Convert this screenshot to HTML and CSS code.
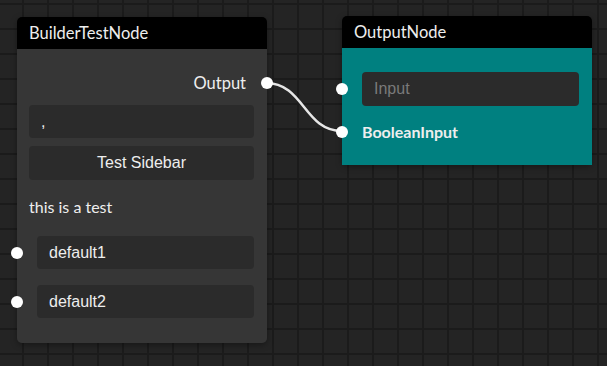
FILE: index.html
```html
<!DOCTYPE html>
<html lang="en">
  <head>
    <meta charset="UTF-8" />
    <title>Node Editor</title>
    <link rel="stylesheet" href="styles.css">
  </head>
  <body>
    <div class="editor">
      <!-- connection between the two nodes -->
      <svg class="wires" width="607" height="366">
        <path d="M266 83 C 304 83, 304 131, 342 131" />
      </svg>

      <div class="node node-builder">
        <div class="node-title">BuilderTestNode</div>
        <div class="node-body">
          <div class="port-row output-row">
            <span class="port-label">Output</span>
            <span class="socket socket-right"></span>
          </div>
          <div class="field">,</div>
          <button class="node-button">Test Sidebar</button>
          <div class="port-row text-row">this is a test</div>
          <div class="port-row input-row">
            <span class="socket socket-left"></span>
            <div class="field">default1</div>
          </div>
          <div class="port-row input-row second">
            <span class="socket socket-left"></span>
            <div class="field">default2</div>
          </div>
        </div>
      </div>

      <div class="node node-output">
        <div class="node-title">OutputNode</div>
        <div class="node-body">
          <div class="port-row input-row">
            <span class="socket socket-left"></span>
            <div class="field placeholder">Input</div>
          </div>
          <div class="port-row bool-row">
            <span class="socket socket-left"></span>
            <span class="port-label">BooleanInput</span>
          </div>
        </div>
      </div>
    </div>
  </body>
</html>
```

FILE: styles.css
```css
* {
  box-sizing: border-box;
}

body {
  margin: 0;
  background-color: #232323;
  font-family: Lato, "Open Sans", sans-serif;
  color: #eeeeee;
}

.editor {
  position: relative;
  width: 607px;
  height: 366px;
  overflow: hidden;
  background-color: #242424;
  background-image:
    linear-gradient(to right, #1b1b1b 2px, transparent 2px),
    linear-gradient(to bottom, #1b1b1b 2px, transparent 2px);
  background-size: 25px 25px;
  background-position: 22px 3px;
}

.wires {
  position: absolute;
  top: 0;
  left: 0;
}

.wires path {
  fill: none;
  stroke: #e6e6e6;
  stroke-width: 2.5;
}

.node {
  position: absolute;
  width: 250px;
  border-radius: 5px;
  box-shadow: 0 2px 6px rgba(0, 0, 0, 0.35);
}

.node-builder {
  left: 17px;
  top: 17px;
}

.node-output {
  left: 342px;
  top: 16px;
}

.node-title {
  height: 32px;
  padding: 0 12px;
  background-color: #000;
  border-radius: 5px 5px 0 0;
  font-size: 16.5px;
  line-height: 32px;
}

.node-body {
  display: flex;
  flex-direction: column;
  background-color: #363636;
  border-radius: 0 0 5px 5px;
  padding: 22px 13px 25px 12px;
}

.node-output .node-body {
  background-color: #008080;
  border-radius: 0;
  padding: 24px 13px 21px 20px;
}

.port-row {
  position: relative;
  display: flex;
  align-items: center;
  font-size: 16px;
  line-height: 24px;
}

.output-row {
  justify-content: flex-end;
  padding-right: 8px;
  font-size: 16.5px;
}

.field {
  flex: 1;
  height: 33px;
  margin-top: 10px;
  padding: 0 12px;
  background-color: #2b2b2b;
  border-radius: 4px;
  font-family: "Liberation Sans", Arial, sans-serif;
  font-size: 16px;
  line-height: 33px;
  color: #eeeeee;
}

.node-button {
  height: 34px;
  margin-top: 8px;
  border: none;
  border-radius: 4px;
  background-color: #2b2b2b;
  font-family: "Liberation Sans", Arial, sans-serif;
  font-size: 16px;
  color: #eeeeee;
}

.text-row {
  margin-top: 15px;
}

.input-row {
  margin-top: 17px;
  padding-left: 8px;
}

.input-row.second {
  margin-top: 16px;
}

.input-row .field {
  margin-top: 0;
}

.node-output .input-row {
  margin-top: 0;
  padding-left: 0;
}

.node-output .input-row .field {
  height: 34px;
  line-height: 34px;
}

.placeholder {
  color: #7a7a7a;
}

.bool-row {
  margin-top: 14px;
}

.bool-row .port-label {
  font-weight: 700;
}

.socket {
  position: absolute;
  top: 50%;
  width: 12px;
  height: 12px;
  margin-top: -6px;
  border-radius: 50%;
  background-color: #fff;
}

.socket-right {
  right: -19px;
}

.socket-left {
  left: -18px;
}

.node-output .socket-left {
  left: -26px;
}
```
